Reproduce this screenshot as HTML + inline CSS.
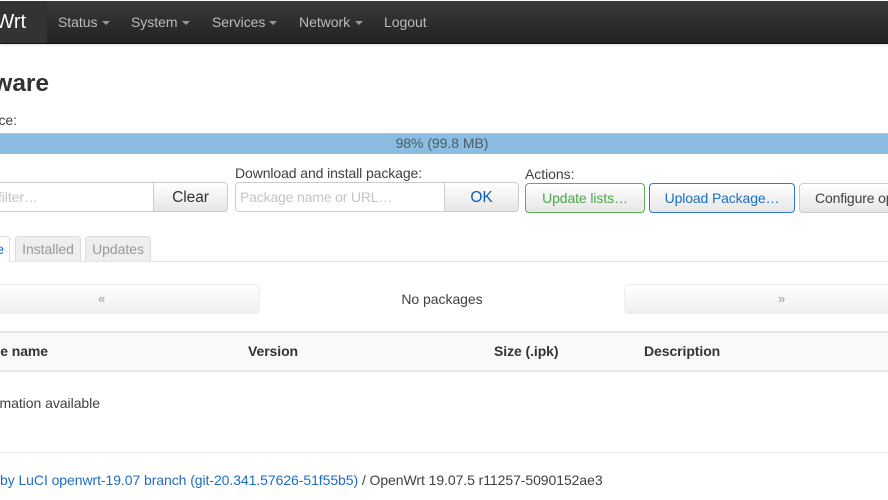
<!DOCTYPE html>
<html><head><meta charset="utf-8"><title>Software</title>
<style>
html,body{margin:0;padding:0;background:#fff;width:888px;height:500px;overflow:hidden}
body{position:relative;font:14px/20px "Liberation Sans",sans-serif;color:#404040;letter-spacing:-.04px}
.a{position:absolute;white-space:nowrap}
.r{position:absolute;left:0;white-space:nowrap;overflow:hidden;display:flex;justify-content:flex-end}
.r span{flex:none}
.c{position:absolute;white-space:nowrap;text-align:center;box-sizing:border-box}
.nav{position:absolute;left:0;top:1px;width:888px;height:42px;background:linear-gradient(#3a3a3a,#222 100%);border-bottom:1px solid #111;box-sizing:content-box;box-shadow:0 1px 3px rgba(0,0,0,.12)}
.brand{position:absolute;left:0;top:1px;width:47px;height:42px;background:#333}
.n{position:absolute;top:12px;color:#bbb;font-size:14px;white-space:nowrap}
.car{position:absolute;top:21px;width:0;height:0;border-left:4px solid transparent;border-right:4px solid transparent;border-top:4px solid #999}
.btn{position:absolute;box-sizing:border-box;height:31px;border:1px solid #ccc;border-radius:4px;background:linear-gradient(#fff,#e6e6e6);text-align:center;line-height:29px;white-space:nowrap;overflow:hidden;font-size:14px}
.inp{position:absolute;box-sizing:border-box;height:31px;border:1px solid #ccc;background:#fff;color:#c4c4c4;line-height:29px;white-space:nowrap;overflow:hidden}
.tab{position:absolute;box-sizing:border-box;top:236px;height:25px;background:#eee;border:1px solid #ddd;border-bottom:0;border-radius:3px 3px 0 0;color:#999;text-align:center;line-height:25px}
.pg{position:absolute;box-sizing:border-box;top:284px;height:30px;background:linear-gradient(#fff,#efefef);border:1px solid #eee;border-radius:4px;color:#999;text-align:center;line-height:28px}
.th{position:absolute;top:341px;font-weight:bold;color:#333;white-space:nowrap;letter-spacing:-.08px}
</style></head><body>
<div class="nav"></div>
<div class="brand"></div>
<div class="r" style="width:26px;top:11px;font-size:20px;line-height:22px;color:#fff"><span>OpenWrt</span></div>
<div class="n" style="left:58px">Status</div><div class="car" style="left:102px"></div>
<div class="n" style="left:131px">System</div><div class="car" style="left:182px"></div>
<div class="n" style="left:212px">Services</div><div class="car" style="left:269px"></div>
<div class="n" style="left:299px">Network</div><div class="car" style="left:355px"></div>
<div class="n" style="left:384px">Logout</div>

<div class="r" style="width:49px;top:70px;font-size:24.5px;line-height:28px;font-weight:bold;color:#333"><span>Software</span></div>
<div class="r" style="width:17px;top:110px"><span>Free space:</span></div>
<div class="a" style="left:0;top:133px;width:888px;height:21px;background:#8cbde0;border-top:1px solid #a9c8dc;box-sizing:border-box"></div>
<div class="c" style="left:0;width:884px;top:133px;color:#4a5a68">98% (99.8 MB)</div>

<div class="inp" style="left:0;top:182px;width:155px;height:30px;line-height:29px;border-left:0;padding-left:0;font-size:14px;display:flex;justify-content:flex-end;padding-right:116px"><span style="flex:none">Type to filter…</span></div>
<div class="btn" style="left:153px;top:182px;width:75px;height:30px;line-height:30px;color:#333;font-size:15.5px;border-radius:0 4px 4px 0">Clear</div>

<div class="a" style="left:235px;top:163px;letter-spacing:-.1px">Download and install package:</div>
<div class="inp" style="left:235px;top:182px;width:210px;height:30px;line-height:29px;padding-left:4px;border-radius:4px 0 0 4px;letter-spacing:-.17px">Package name or URL…</div>
<div class="btn" style="left:444px;top:182px;width:75px;height:30px;line-height:30px;color:#0a5fb4;font-size:15.5px;border-radius:0 4px 4px 0">OK</div>

<div class="a" style="left:525px;top:164px">Actions:</div>
<div class="btn" style="left:525px;top:183px;width:120px;height:30px;line-height:28px;border-color:#5cad5c;color:#4aa84a;letter-spacing:-.1px">Update lists…</div>
<div class="btn" style="left:649px;top:183px;width:146px;height:30px;line-height:28px;border-color:#2f7ac4;color:#1a6fc4;letter-spacing:-.13px">Upload Package…</div>
<div class="btn" style="left:799px;top:183px;width:89px;height:30px;line-height:28px;color:#404040;text-align:left;padding-left:15px;border-right:0;border-radius:4px 0 0 4px;letter-spacing:-.15px">Configure opkg…</div>

<div class="a" style="left:0;top:261px;width:888px;height:1px;background:#e4e4e4"></div>
<div class="a" style="left:0;top:236px;width:10px;height:26px;box-sizing:border-box;background:#fff;border-right:1px solid #ddd;border-top:1px solid #ddd;border-radius:0 3px 0 0"></div>
<div class="r" style="width:4px;top:239px;color:#0a6fc9"><span>Available</span></div>
<div class="tab" style="left:15px;width:66px">Installed</div>
<div class="tab" style="left:85px;width:66px">Updates</div>

<div class="pg" style="left:0;width:260px;font-size:13px;text-align:left;padding-left:98px;border-left:0;border-radius:0 4px 4px 0">«</div>
<div class="c" style="left:260px;width:364px;top:289px">No packages</div>
<div class="pg" style="left:624px;width:264px;font-size:13px;text-align:left;padding-left:153px;border-right:0;border-radius:4px 0 0 4px">»</div>

<div class="a" style="left:0;top:331px;width:888px;height:41px;box-sizing:border-box;background:#f9f9f9;border-top:2px solid #e6e6e6;border-bottom:2px solid #e6e6e6"></div>
<div class="r th" style="width:48px"><span>Package name</span></div>
<div class="th" style="left:248px">Version</div>
<div class="th" style="left:494px">Size (.ipk)</div>
<div class="th" style="left:644px">Description</div>

<div class="r" style="width:100px;top:393px"><span>No information available</span></div>
<div class="a" style="left:0;top:452px;width:888px;height:1px;background:#e8e8e8"></div>
<div class="a" style="left:0;top:470px;letter-spacing:-.07px"><span style="color:#1f6cc0">by LuCI openwrt-19.07 branch (git-20.341.57626-51f55b5)</span> / OpenWrt 19.07.5 r11257-5090152ae3</div>
</body></html>
